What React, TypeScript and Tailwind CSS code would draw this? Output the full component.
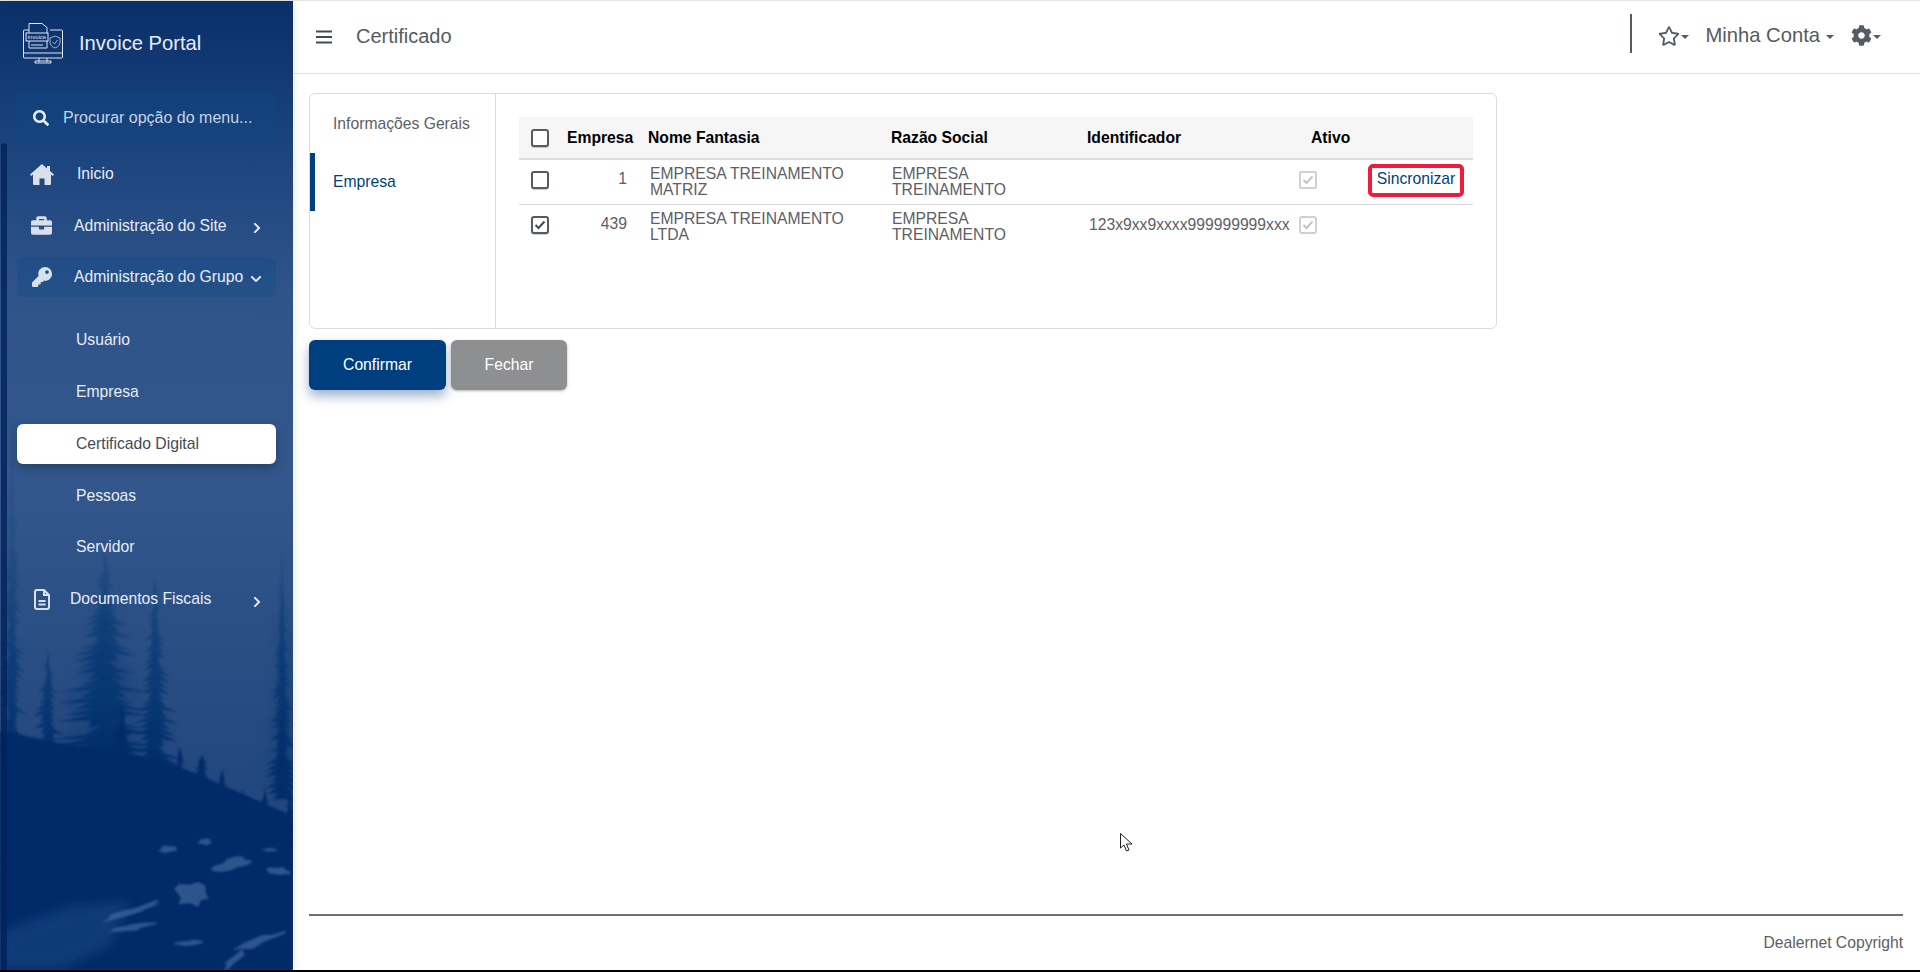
import { FaBriefcase, FaChevronDown, FaChevronRight, FaCog, FaKey, FaRegStar, FaSearch } from "react-icons/fa";

const font = "font-['Liberation_Sans',Arial,sans-serif]";

// small repeatable noise so the scene never changes between renders
const noise = (n: number) => {
  const v = Math.sin(n * 12.9898) * 43758.5453;
  return v - Math.floor(v);
};

// conifer silhouette with uneven branches
function tree(x: number, top: number, bottom: number, halfWidth: number) {
  const steps = Math.round((bottom - top) / 6);
  let left = "";
  let right = "";
  for (let i = 1; i <= steps; i++) {
    const t = i / steps;
    const y = top + (bottom - top) * t;
    const a = halfWidth * t * (0.35 + noise(x + i) * 0.85);
    const b = halfWidth * t * (0.35 + noise(x + i + 50) * 0.85);
    right += `L${(x + a).toFixed(1)} ${y.toFixed(1)} L${(x + a * 0.3).toFixed(1)} ${(y - 2).toFixed(1)} `;
    left = `L${(x - b * 0.3).toFixed(1)} ${(y - 2).toFixed(1)} L${(x - b).toFixed(1)} ${(y - 1).toFixed(1)} ` + left;
  }
  return `M${x} ${top} ${right}${left}Z`;
}

// irregular patch of light on the rocks
function rock(cx: number, cy: number, w: number, h: number, tilt = 0) {
  const pts: string[] = [];
  for (let i = 0; i < 14; i++) {
    const a = (i / 14) * Math.PI * 2;
    const r = 0.55 + noise(cx + cy + i) * 0.6;
    const px = (Math.cos(a) * w * r) / 2;
    const py = (Math.sin(a) * h * r) / 2;
    const c = Math.cos(tilt);
    const s = Math.sin(tilt);
    pts.push(`${(cx + px * c - py * s).toFixed(1)},${(cy + px * s + py * c).toFixed(1)}`);
  }
  return pts.join(" ");
}

const rocks: [number, number, number, number, number?][] = [
  [168, 848, 22, 8],
  [205, 841, 16, 7],
  [233, 863, 42, 13, -0.25],
  [280, 870, 28, 10, 0.2],
  [270, 849, 16, 5],
  [193, 893, 42, 24],
  [133, 910, 74, 8, -0.3],
  [130, 927, 52, 7, -0.2],
  [190, 942, 34, 6],
  [258, 940, 56, 10, -0.35],
  [235, 958, 34, 8, -0.7],
];

function SidebarScene() {
  return (
    <svg className="absolute inset-0 h-full w-full" viewBox="0 0 293 969" preserveAspectRatio="none" aria-hidden="true">
      <defs>
        <filter id="soft" x="-20%" y="-20%" width="140%" height="140%">
          <feGaussianBlur stdDeviation="1.1" />
        </filter>
        <filter id="softer" x="-30%" y="-30%" width="160%" height="160%">
          <feGaussianBlur stdDeviation="6" />
        </filter>
        <linearGradient id="fade" gradientUnits="userSpaceOnUse" x1="0" y1="540" x2="0" y2="760">
          <stop offset="0" stopColor="#0c3670" stopOpacity="0.2" />
          <stop offset="0.5" stopColor="#0a3470" stopOpacity="0.6" />
          <stop offset="1" stopColor="#052d69" stopOpacity="0.95" />
        </linearGradient>
      </defs>
      <g filter="url(#softer)" fill="#0f3a75" opacity="0.5">
        <path d={tree(105, 600, 760, 70)} />
        <path d={tree(285, 600, 790, 30)} />
      </g>
      <g filter="url(#soft)" fill="url(#fade)">
        <path d={tree(105, 552, 770, 58)} />
        <path d={tree(155, 575, 770, 26)} />
        <path d={tree(282, 548, 800, 16)} />
        <path d={tree(48, 650, 770, 24)} />
        <path d={tree(12, 415, 760, 16)} />
      </g>
      <g filter="url(#soft)" fill="#042c68">
        <path d={tree(122, 700, 770, 18)} />
        <path d={tree(180, 745, 790, 12)} />
        <path d={tree(202, 752, 800, 17)} />
        <path d={tree(222, 768, 810, 14)} />
        <path d={tree(243, 788, 830, 13)} />
        <path d={tree(265, 785, 840, 14)} />
        <path d={tree(290, 778, 850, 10)} />
        <path d="M0 730 L60 742 L133 753 L173 763 L213 780 L293 815 L293 969 L0 969Z" />
      </g>
      <g filter="url(#softer)" fill="#154280" opacity="0.7">
        <path d="M0 969 L0 930 L70 905 L130 900 L110 945 L60 969Z" />
      </g>
      <g filter="url(#soft)" fill="#4a6ea5" opacity="0.62">
        {rocks.map(([x, y, w, h, t]) => (
          <polygon key={`${x}-${y}`} points={rock(x, y, w, h, t ?? 0)} />
        ))}
      </g>
    </svg>
  );
}

function InvoiceLogo() {
  return (
    <svg width="42" height="42" viewBox="0 0 42 42" fill="none" stroke="#dfe6f0" strokeWidth="1" aria-hidden="true" className="shrink-0">
      <path d="M7 8H2.500a1 1 0 0 0-1 1v26a1 1 0 0 0 1 1h37a1 1 0 0 0 1-1V9a1 1 0 0 0-1-1H28" />
      <path d="M1.500 31H40.500" />
      <path d="M17 36v4M25 36v4M13 41h16v-2H13z" />
      <path d="M7 11V1.500h13l5 4V11" />
      <rect x="4" y="11" width="22" height="8" />
      <path d="M7 19v7h18v-7M9 23h12" />
      <text x="5.500" y="17" fontSize="6" stroke="none" fill="#dfe6f0" fontFamily="Liberation Sans, sans-serif">invoice</text>
      <path d="M33 14l5 2v4c0 3-2 5-5 6-3-1-5-3-5-6v-4z" stroke="#9db0c9" />
      <path d="M30.500 20l2 2 3-4" stroke="#9db0c9" />
    </svg>
  );
}

function HomeIcon() {
  return (
    <svg width="24" height="21" viewBox="0 0 24 21" fill="currentColor" aria-hidden="true">
      <path d="M12 0L0 10.500l1.200 1.400L3 10.400V20a1 1 0 0 0 1 1h5.500v-6.500h5V21H20a1 1 0 0 0 1-1v-9.600l1.800 1.500L24 10.500l-4-3.500V2h-3v2.400z" />
    </svg>
  );
}

function FileIcon() {
  return (
    <svg width="16" height="21" viewBox="0 0 16 21" fill="none" stroke="currentColor" strokeWidth="2" aria-hidden="true">
      <path d="M10 1H3a2 2 0 0 0-2 2v15a2 2 0 0 0 2 2h10a2 2 0 0 0 2-2V6z" />
      <path d="M10 1v5h5M4.500 12h7M4.500 15.500h7" />
    </svg>
  );
}

function NavRow({ icon, label, labelClass, arrow, open }: { icon: React.ReactNode; label: string; labelClass: string; arrow?: "right" | "down"; open?: boolean }) {
  return (
    <div className={`relative flex h-10 items-center rounded-md ${open ? "bg-[#0e4a85]/30" : ""}`}>
      <span className="flex w-[45px] shrink-0 justify-center pl-[4px] text-[#d9e0ec]">{icon}</span>
      <span className={`${labelClass} text-[15.7px] leading-none text-[#e8edf5]`}>{label}</span>
      {arrow === "right" && <FaChevronRight className="ml-auto mr-[13px] mt-[5px] text-[12px] text-[#e8edf5]" />}
      {arrow === "down" && <FaChevronDown className="ml-auto mr-[14px] mt-[5px] text-[12px] text-[#e8edf5]" />}
    </div>
  );
}

function SubRow({ label, active, first }: { label: string; active?: boolean; first?: boolean }) {
  return (
    <div className={`flex h-10 items-center rounded-md pl-[59px] text-[15.7px] ${first ? "mt-[12px]" : ""} ${active ? "bg-white text-[#444b56] shadow-[0_4px_10px_rgba(0,0,0,0.25)]" : "text-[#e8edf5]"}`}>
      {label}
    </div>
  );
}

function Sidebar() {
  return (
    <aside className="relative z-10 flex w-[293px] shrink-0 flex-col overflow-hidden bg-[linear-gradient(180deg,#0a2f69_0%,#17407a_12%,#2f548a_30%,#33578c_50%,#2a4f85_65%,#23487f_80%,#1b437b_100%)] shadow-[3px_0_6px_rgba(0,0,0,0.06)]">
      <SidebarScene />
      {/* scrollbar thumb */}
      <div className="absolute bottom-0 left-[1px] top-[142px] w-[6px] rounded-t-sm bg-[#02205a]/80" />
      <div className="relative flex h-[91px] items-center gap-[15px] pb-[7px] pl-[22px]">
        <InvoiceLogo />
        <span className="text-[20.200px] text-[#e8edf5]">Invoice Portal</span>
      </div>
      <div className="relative mx-[17px] flex flex-col">
        <div className="mb-[11px] flex h-[51px] items-center rounded-md bg-[#0e4a85]/30 pl-[16px]">
          <FaSearch className="text-[16px] text-[#e8edf5]" />
          <span className="ml-[14px] text-[16px] text-[#c8d3e3]">Procurar opção do menu...</span>
        </div>
        <div className="flex flex-col gap-[11.75px]">
          <NavRow icon={<HomeIcon />} label="Inicio" labelClass="ml-[15px]" />
          <NavRow icon={<FaBriefcase className="text-[21px]" />} label="Administração do Site" labelClass="ml-[12px]" arrow="right" />
          <div className="-mt-[1px]">
            <NavRow icon={<FaKey className="text-[20px]" />} label="Administração do Grupo" labelClass="ml-[12px]" arrow="down" open />
          </div>
          <SubRow label="Usuário" first />
          <SubRow label="Empresa" />
          <SubRow label="Certificado Digital" active />
          <SubRow label="Pessoas" />
          <SubRow label="Servidor" />
          <NavRow icon={<FileIcon />} label="Documentos Fiscais" labelClass="ml-[8px]" arrow="right" />
        </div>
      </div>
    </aside>
  );
}

function Caret() {
  return <span className="mt-[3px] h-0 w-0 border-x-[4px] border-t-[4px] border-x-transparent border-t-[#555b62]" />;
}

function Header() {
  return (
    <header className="flex h-[73px] shrink-0 items-center border-b border-[#e2e2e2] pb-[3px] pl-[23px] pr-[39px] text-[#555b62]">
      <svg width="16" height="14" viewBox="0 0 16 14" aria-hidden="true" className="mt-[3px]">
        <path d="M0 1.500H16M0 7H16M0 12.500H16" stroke="#444b52" strokeWidth="2" />
      </svg>
      <span className="ml-[24px] text-[20px]">Certificado</span>
      <div className="mb-[4px] ml-auto h-[39px] w-[2px] bg-[#555b62]" />
      <div className="ml-[26px] flex items-center gap-[1px]">
        <FaRegStar className="text-[22px]" />
        <Caret />
      </div>
      <div className="ml-[17px] flex items-center gap-[6px]">
        <span className="text-[20.200px]">Minha Conta</span>
        <Caret />
      </div>
      <div className="ml-[17px] flex items-center gap-[1px]">
        <FaCog className="text-[21px]" />
        <Caret />
      </div>
    </header>
  );
}

function Check({ checked, disabled }: { checked?: boolean; disabled?: boolean }) {
  return (
    <span className={`flex h-[18px] w-[18px] items-center justify-center rounded-[3px] border-2 bg-white ${disabled ? "border-[#d0d0d0]" : "border-[#555b62] shadow-[0_1px_1px_rgba(0,0,0,0.2)]"}`}>
      {checked && (
        <svg width="12" height="10" viewBox="0 0 12 10" aria-hidden="true">
          <path d="M1.500 5l3 3 6-6.500" fill="none" stroke={disabled ? "#c4c4c4" : "#444b52"} strokeWidth="2" />
        </svg>
      )}
    </span>
  );
}

const rows = [
  { id: "1", nome: ["EMPRESA TREINAMENTO", "MATRIZ"], ident: "", sync: true },
  { id: "439", nome: ["EMPRESA TREINAMENTO", "LTDA"], ident: "123x9xx9xxxx999999999xxx", sync: false },
];

function EmpresaTable() {
  return (
    <table className="w-[954px] table-fixed border-collapse text-[15.7px] text-[#5c6066]">
      <colgroup>
        <col className="w-[40px]" />
        <col className="w-[81px]" />
        <col className="w-[243px]" />
        <col className="w-[196px]" />
        <col className="w-[224px]" />
        <col className="w-[64px]" />
        <col className="w-[106px]" />
      </colgroup>
      <thead>
        <tr className="h-[42px] border-b-2 border-[#dcdcdc] bg-[#f6f6f6] text-left text-[15.7px] font-bold text-black">
          <th className="pl-[12px]"><Check /></th>
          <th className="pl-[8px]">Empresa</th>
          <th className="pl-[8px]">Nome Fantasia</th>
          <th className="pl-[8px]">Razão Social</th>
          <th className="pl-[8px]">Identificador</th>
          <th className="pl-[8px]">Ativo</th>
          <th />
        </tr>
      </thead>
      <tbody>
        {rows.map((r) => (
          <tr key={r.id} className="h-[45px] border-b border-[#d8d8d8] last:border-b-0">
            <td className="pb-[3px] pl-[12px]"><Check checked={r.id === "439"} /></td>
            <td className="pb-[6px] pr-[13px] text-right">{r.id}</td>
            <td className="pl-[10px] leading-[16px]">{r.nome[0]}<br />{r.nome[1]}</td>
            <td className="pl-[9px] leading-[16px]">EMPRESA<br />TREINAMENTO</td>
            <td className="whitespace-nowrap pb-[4px] pl-[10px]">{r.ident}</td>
            <td className="pb-[3px]"><span className="-ml-[4px] block w-[18px]"><Check checked disabled /></span></td>
            <td className="pb-[3px] pl-[1px]">
              {r.sync && (
                <span className="flex h-[33px] w-[96px] items-center justify-center rounded-[5px] border-[4px] border-[#ed1c3c] pb-[2px] text-[#003f80]">Sincronizar</span>
              )}
            </td>
          </tr>
        ))}
      </tbody>
    </table>
  );
}

function App() {
  return (
    <div className={`${font} flex h-[972px] w-[1920px] flex-col overflow-hidden bg-white`}>
      <div className="flex min-h-0 flex-1 border-t border-[#e2e2e2]">
        <Sidebar />
        <main className="flex min-w-0 flex-1 flex-col">
          <Header />
          <div className="flex flex-1 flex-col pl-[16px] pr-[17px] pt-[19px]">
            <div className="flex h-[236px] w-[1188px] rounded-md border border-[#dcdcdc]">
              <div className="flex w-[186px] shrink-0 flex-col border-r border-[#dcdcdc] pt-[1px] text-[15.7px]">
                <div className="flex h-[58px] items-center pl-[23px] text-[#5c6066]">Informações Gerais</div>
                <div className="flex h-[58px] items-center border-l-[5px] border-[#003f80] pl-[18px] text-[#003f80]">Empresa</div>
              </div>
              <div className="pl-[23px] pt-[23px]">
                <EmpresaTable />
              </div>
            </div>
            <div className="mt-[11px] flex gap-[5px] text-[15.7px] text-white">
              <button className="h-[50px] w-[137px] rounded-md bg-[#003f7f] shadow-[0_6px_12px_rgba(0,63,127,0.4)]">Confirmar</button>
              <button className="h-[50px] w-[116px] rounded-md bg-[#8e8f91] shadow-[0_1px_3px_rgba(0,0,0,0.3)]">Fechar</button>
            </div>
            <footer className="mt-auto border-t-2 border-[#707070] pb-[17px] pt-[16px] text-right text-[15.7px] leading-[21px] text-[#5c6066]">
              Dealernet Copyright
            </footer>
          </div>
        </main>
      </div>
      <div className="h-[2px] shrink-0 bg-black" />
      {/* mouse pointer captured in the screenshot */}
      <svg width="14" height="20" viewBox="0 0 14 20" aria-hidden="true" className="absolute left-[1120px] top-[833px]">
        <path d="M.5.500V15l3.500-3 2.500 6 2.500-1-2.500-6H12Z" fill="#fff" stroke="#222" strokeWidth="1" />
      </svg>
    </div>
  );
}

export default App;
